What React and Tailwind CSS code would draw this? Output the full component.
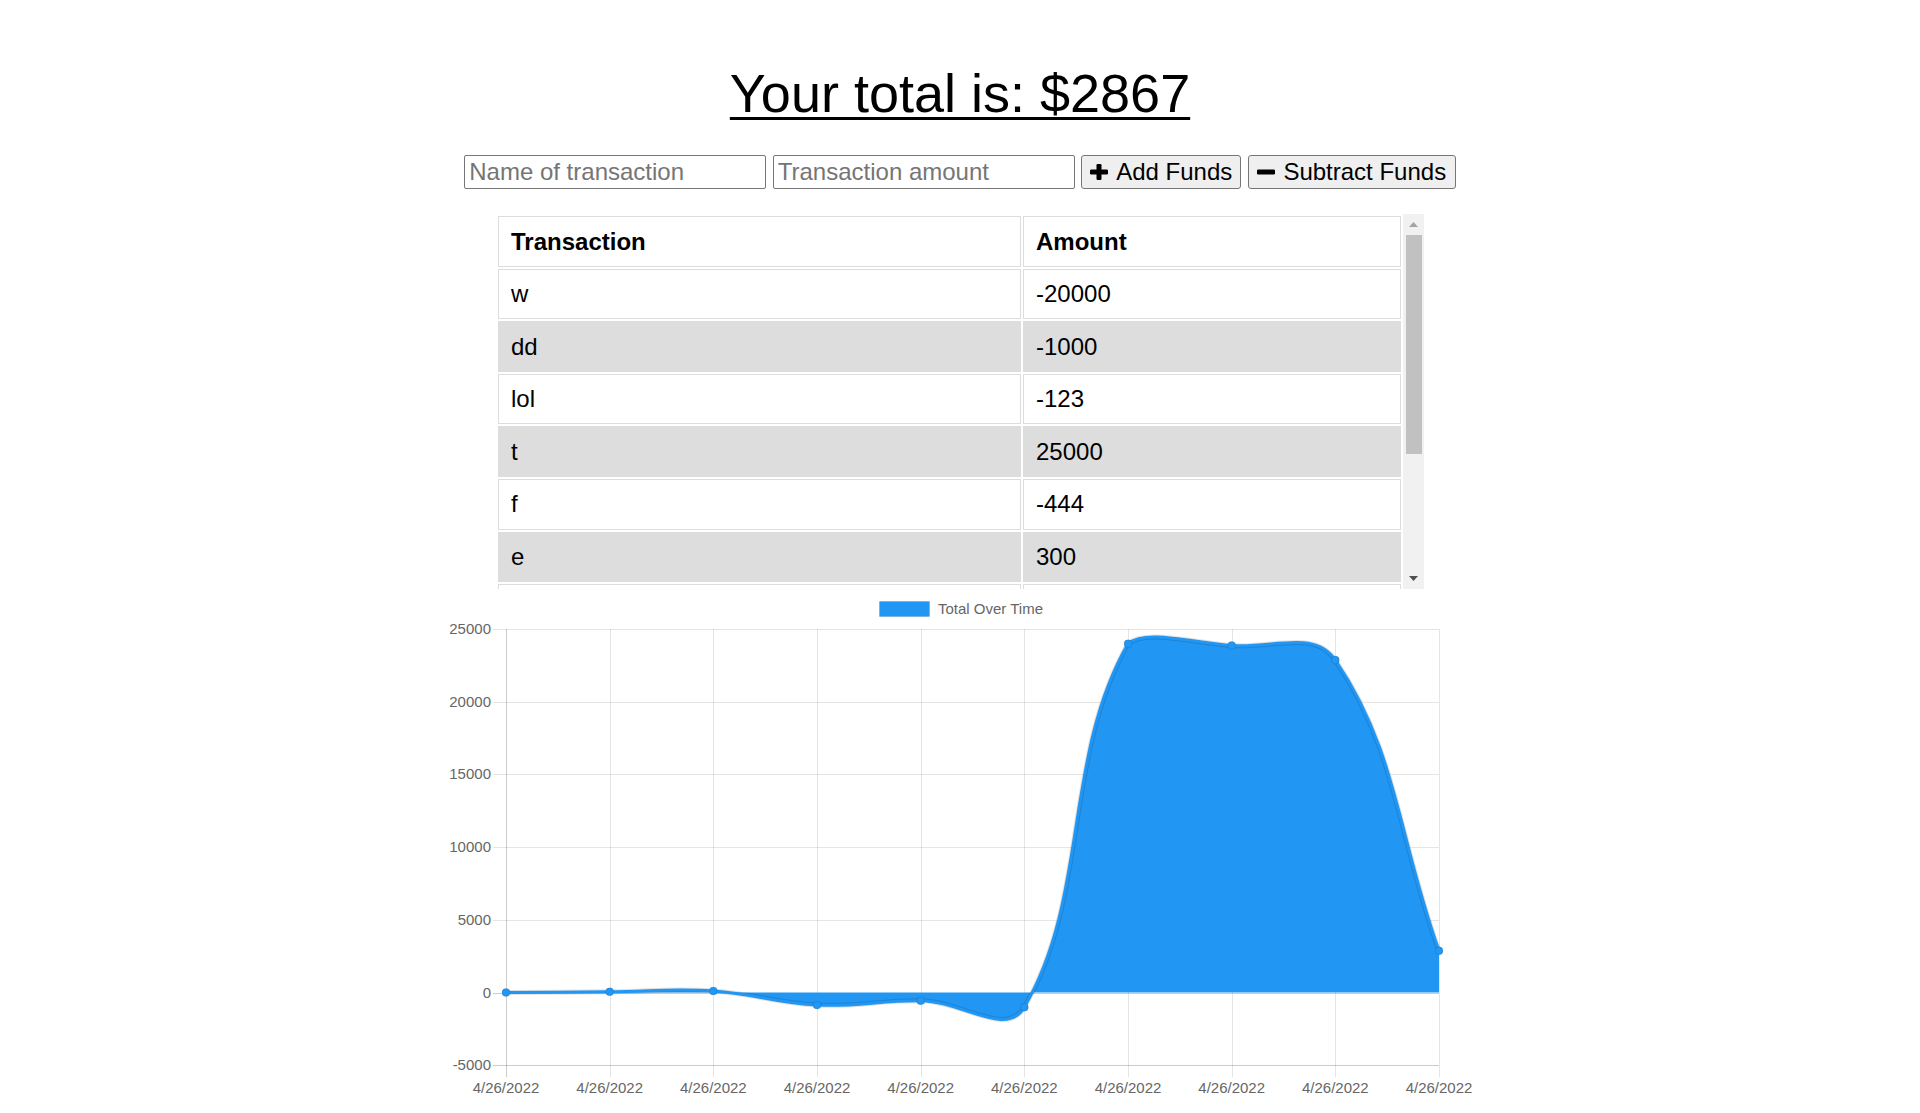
import React from 'react';

const rows = [
  { name: 'w', amount: -20000 },
  { name: 'dd', amount: -1000 },
  { name: 'lol', amount: -123 },
  { name: 't', amount: 25000 },
  { name: 'f', amount: -444 },
  { name: 'e', amount: 300 },
  { name: 'a', amount: -966 },
  { name: 'c', amount: 50 },
  { name: 'b', amount: 50 },
  { name: 'q', amount: 0 },
];

// chart geometry, in page pixels (the svg viewBox uses page coordinates)
const vals = [0, 50, 100, -866, -566, -1010, 23990, 23867, 22867, 2867];
const X0 = 506;
const X1 = 1439;
const DX = (X1 - X0) / 9;
const ZERO = 992.5;
const K = 0.01454;
const TOP = ZERO - 25000 * K;
const BOTTOM = ZERO + 5000 * K;
const ticks = [25000, 20000, 15000, 10000, 5000, 0, -5000];

const pts = vals.map((v, i) => ({ x: X0 + i * DX, y: ZERO - v * K }));

const clamp = (v, a, b) => Math.max(a, Math.min(b, v));

// same spline chart.js v2 uses (tension 0.4)
function controlPoints(list, t = 0.4) {
  return list.map((p, i) => {
    const prev = list[i - 1] || p;
    const next = list[i + 1] || p;
    const d01 = Math.hypot(p.x - prev.x, p.y - prev.y);
    const d12 = Math.hypot(next.x - p.x, next.y - p.y);
    let s01 = d01 / (d01 + d12);
    let s12 = d12 / (d01 + d12);
    if (isNaN(s01)) s01 = 0;
    if (isNaN(s12)) s12 = 0;
    const fa = t * s01;
    const fb = t * s12;
    return {
      pX: clamp(p.x - fa * (next.x - prev.x), X0, X1),
      pY: clamp(p.y - fa * (next.y - prev.y), TOP, BOTTOM),
      nX: clamp(p.x + fb * (next.x - prev.x), X0, X1),
      nY: clamp(p.y + fb * (next.y - prev.y), TOP, BOTTOM),
    };
  });
}

const cps = controlPoints(pts);
let line = `M${pts[0].x},${pts[0].y}`;
for (let i = 1; i < pts.length; i++) {
  line += ` C${cps[i - 1].nX},${cps[i - 1].nY} ${cps[i].pX},${cps[i].pY} ${pts[i].x},${pts[i].y}`;
}
const area = `${line} L${pts[pts.length - 1].x},${ZERO} L${pts[0].x},${ZERO} Z`;

function Chart() {
  return (
    <svg
      width="1080"
      height="510"
      viewBox="420 595 1080 510"
      className="block mx-auto mt-[6px]"
      style={{ fontFamily: '"Liberation Sans", Arial, sans-serif' }}
    >
      {/* legend */}
      <rect x="879.5" y="601.5" width="50" height="15" fill="#2196f3" stroke="rgba(0,0,0,0.1)" />
      <text x="938" y="613.5" fontSize="15" fill="#666">Total Over Time</text>

      {/* horizontal grid */}
      {ticks.map(v => {
        const y = Math.round(ZERO - v * K) + 0.5;
        const strong = v === 0 || v === -5000;
        return (
          <g key={v}>
            <line x1="493" x2={X1} y1={y} y2={y} stroke={strong ? 'rgba(0,0,0,0.2)' : 'rgba(0,0,0,0.1)'} strokeWidth="1" />
            <text x="491" y={y + 4} fontSize="15" fill="#666" textAnchor="end">{v}</text>
          </g>
        );
      })}

      {/* vertical grid + labels */}
      {pts.map((p, i) => {
        const x = Math.round(p.x) + 0.5;
        return (
          <g key={i}>
            <line x1={x} x2={x} y1={TOP} y2={BOTTOM + 12} stroke={i === 0 ? 'rgba(0,0,0,0.2)' : 'rgba(0,0,0,0.1)'} strokeWidth="1" />
            <text x={p.x} y="1093" fontSize="15" fill="#666" textAnchor="middle">4/26/2022</text>
          </g>
        );
      })}

      {/* data */}
      <path d={area} fill="#2196f3" />
      <path d={line} fill="none" stroke="rgba(0,0,0,0.12)" strokeWidth="5" />
      <path d={line} fill="none" stroke="#2196f3" strokeWidth="3" />
      {pts.map((p, i) => (
        <circle key={i} cx={p.x} cy={p.y} r="4" fill="#2196f3" stroke="rgba(0,0,0,0.1)" strokeWidth="1" />
      ))}
    </svg>
  );
}

function Scrollbar() {
  return (
    <div className="w-[21px] h-[375px] bg-[#f1f1f1] flex flex-col items-center">
      <div className="h-[21px] w-full flex items-center justify-center">
        <svg width="9" height="5" viewBox="0 0 9 5"><path d="M4.5 0 L9 5 L0 5 Z" fill="#a3a3a3" /></svg>
      </div>
      <div className="w-[16px] h-[219px] bg-[#c1c1c1]" />
      <div className="flex-1" />
      <div className="h-[21px] w-full flex items-center justify-center">
        <svg width="9" height="5" viewBox="0 0 9 5"><path d="M0 0 L9 0 L4.5 5 Z" fill="#505050" /></svg>
      </div>
    </div>
  );
}

export default function App() {
  return (
    <div className="min-h-[1113px] bg-white text-black font-['Liberation_Sans',Arial,sans-serif]">
      <h1 className="pt-[62px] text-center text-[54px] leading-[62px] font-normal">
        <span className="underline decoration-[3px] underline-offset-[5px]">Your total is: $2867</span>
      </h1>

      <div className="mt-[31px] flex justify-center items-center gap-[6.5px]">
        <input
          type="text"
          placeholder="Name of transaction"
          className="w-[302px] h-[34px] border border-[#767676] rounded-[2px] px-[4px] text-[24px] leading-[27.6px] placeholder:text-[#757575] outline-none"
        />
        <input
          type="text"
          placeholder="Transaction amount"
          className="w-[302px] h-[34px] border border-[#767676] rounded-[2px] px-[4px] text-[24px] leading-[27.6px] placeholder:text-[#757575] outline-none"
        />
        <button className="h-[34px] w-[160px] flex items-center justify-center gap-[8px] border border-[#767676] rounded-[3px] bg-[#efefef] text-[24px] leading-[27.6px]">
          <svg width="18" height="16" viewBox="0 0 18 16">
            <rect x="0" y="5.5" width="18" height="5" rx="1.2" fill="#000" />
            <rect x="6.5" y="0" width="5" height="16" rx="1.2" fill="#000" />
          </svg>
          Add Funds
        </button>
        <button className="h-[34px] w-[208px] flex items-center justify-center gap-[8px] border border-[#767676] rounded-[3px] bg-[#efefef] text-[24px] leading-[27.6px]">
          <svg width="18" height="16" viewBox="0 0 18 16">
            <rect x="0" y="5.5" width="18" height="5" rx="1.2" fill="#000" />
          </svg>
          Subtract Funds
        </button>
      </div>

      <div className="mt-[25px] w-[928px] mx-auto flex">
        <div className="w-[907px] h-[375px] overflow-hidden">
          <table className="w-full border-separate border-spacing-[2px] text-[24px] leading-[27.6px]">
            <thead>
              <tr>
                <th className="w-[523px] border border-[#dddddd] px-[12px] py-[10.5px] text-left font-bold">Transaction</th>
                <th className="border border-[#dddddd] px-[12px] py-[10.5px] text-left font-bold">Amount</th>
              </tr>
            </thead>
            <tbody>
              {rows.map((r, i) => (
                <tr key={i} className={i % 2 === 1 ? 'bg-[#dddddd]' : 'bg-white'}>
                  <td className="border border-[#dddddd] px-[12px] py-[10.5px]">{r.name}</td>
                  <td className="border border-[#dddddd] px-[12px] py-[10.5px]">{r.amount}</td>
                </tr>
              ))}
            </tbody>
          </table>
        </div>
        <Scrollbar />
      </div>

      <Chart />
    </div>
  );
}
